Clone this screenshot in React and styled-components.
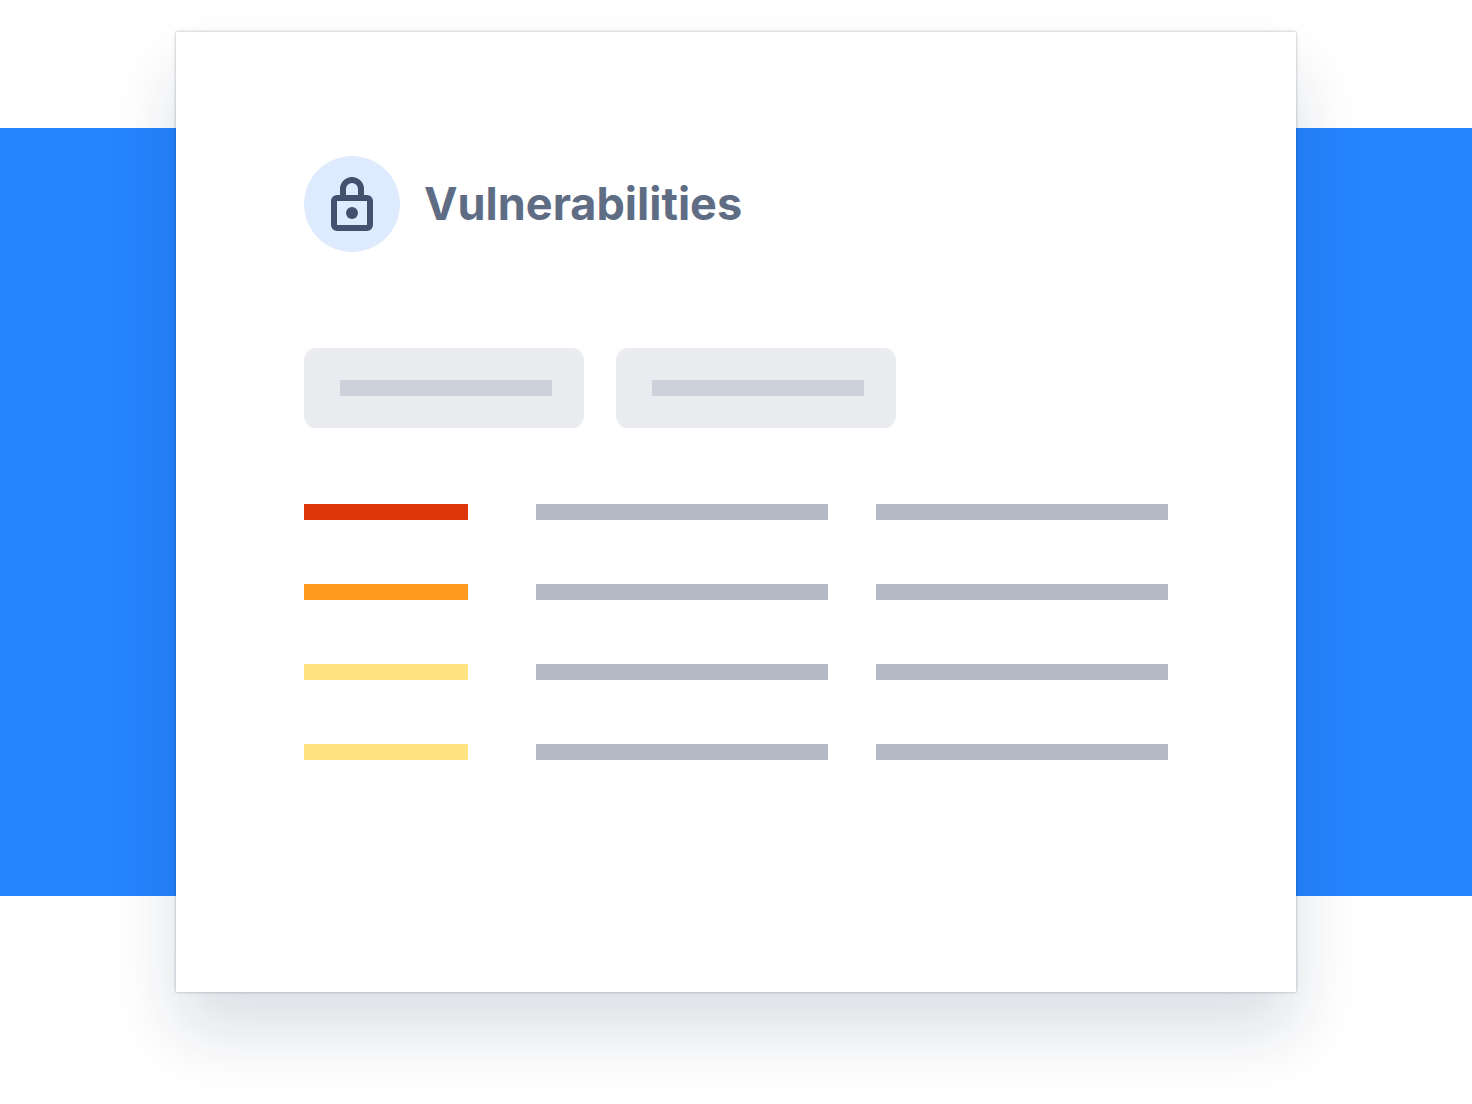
import React from 'react';
import styled, { createGlobalStyle } from 'styled-components';

const GlobalStyle = createGlobalStyle`
  * {
    box-sizing: border-box;
  }

  body {
    margin: 0;
    background: #fff;
    font-family: Inter, 'Liberation Sans', sans-serif;
  }
`;

const Page = styled.main`
  display: grid;
  grid-template-columns: minmax(0, 1fr);
  align-content: start;
  min-height: 100vh;
  padding: 32px 0 112px;
  overflow: hidden;
`;

const Band = styled.div`
  grid-area: 1 / 1;
  margin: 96px 0;
  background: #2684ff;
`;

const Card = styled.section`
  grid-area: 1 / 1;
  justify-self: center;
  width: 100%;
  max-width: 1120px;
  padding: 124px 128px 232px;
  background: #fff;
  box-shadow: 0 0 3px rgba(9, 30, 66, 0.32), 0 40px 64px rgba(9, 30, 66, 0.14);
`;

const Header = styled.header`
  display: flex;
  align-items: center;
  gap: 24px;
  margin-bottom: 96px;
`;

const IconCircle = styled.div`
  display: flex;
  flex: none;
  width: 96px;
  height: 96px;
  border-radius: 50%;
  background: #deebff;
`;

const Title = styled.h1`
  margin: 0;
  font-size: 45px;
  font-weight: 700;
  line-height: 48px;
  color: #5e6c84;
`;

const Filters = styled.div`
  display: flex;
  gap: 32px;
  margin-bottom: 76px;
`;

const Filter = styled.div`
  flex: 0 1 280px;
  padding: 32px 32px 32px 36px;
  border-radius: 12px;
  background: #ebecf0;
`;

const Rows = styled.div`
  display: grid;
  gap: 64px;
`;

const Row = styled.div`
  display: grid;
  grid-template-columns: 184px 1fr 1fr;
  gap: 48px;
`;

const Bar = styled.div`
  height: 16px;
  background: ${(props) => props.$color || '#b3bac5'};
`;

const SeverityBar = styled(Bar)`
  width: 164px;
`;

const severities = ['#de350b', '#ff991f', '#ffe380', '#ffe380'];

const LockIcon = () => (
  <svg width="96" height="96" viewBox="0 0 96 96" fill="none" aria-hidden="true">
    <rect x="30" y="42" width="36" height="30" rx="3" stroke="#42526e" strokeWidth="6" />
    <path d="M39 42V33a9 9 0 0 1 18 0v9" stroke="#42526e" strokeWidth="6" />
    <circle cx="48" cy="57" r="6" fill="#42526e" />
  </svg>
);

const App = () => {
  return (
    <>
      <GlobalStyle />
      <Page>
        <Band />
        <Card>
          <Header>
            <IconCircle>
              <LockIcon />
            </IconCircle>
            <Title>Vulnerabilities</Title>
          </Header>
          <Filters>
            <Filter>
              <Bar $color="#cdd2da" />
            </Filter>
            <Filter>
              <Bar $color="#cdd2da" />
            </Filter>
          </Filters>
          <Rows>
            {severities.map((color, index) => (
              <Row key={index}>
                <SeverityBar $color={color} />
                <Bar />
                <Bar />
              </Row>
            ))}
          </Rows>
        </Card>
      </Page>
    </>
  );
};

export default App;
